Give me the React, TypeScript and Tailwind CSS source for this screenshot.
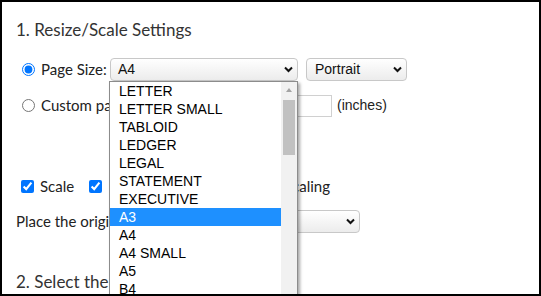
import React from "react"

const sizes = [
  "LETTER",
  "LETTER SMALL",
  "TABLOID",
  "LEDGER",
  "LEGAL",
  "STATEMENT",
  "EXECUTIVE",
  "A3",
  "A4",
  "A4 SMALL",
  "A5",
  "B4",
  "B5",
]

function Chevron() {
  return (
    <svg width="9" height="7" viewBox="0 0 9 7" className="text-[#111]">
      <polyline points="1,1.5 4.5,5 8,1.5" fill="none" stroke="currentColor" strokeWidth="2" />
    </svg>
  )
}

function FakeSelect({ value, className }: { value: string; className: string }) {
  return (
    <div
      className={`flex h-[23px] items-center justify-between rounded-[4px] border border-[#c8c8c8] bg-gradient-to-b from-white to-[#ececec] pr-[4px] font-['Liberation_Sans',Arial,sans-serif] text-[14px] text-[#111] ${className}`}
    >
      <span>{value}</span>
      <Chevron />
    </div>
  )
}

export default function App() {
  return (
    <div className="relative h-[296px] w-[541px] overflow-hidden border-2 border-black bg-white font-['Lato',sans-serif] text-[#222]">
      <div className="pl-[14px] pt-[16px]">
        <h2 className="text-[17px] leading-[24px] text-[#333]">1. Resize/Scale Settings</h2>

        <div className="mt-[16px] flex items-center">
          <input type="radio" name="size" defaultChecked className="m-0 ml-[6px] h-[13px] w-[13px]" />
          <span className="ml-[6px] w-[69px] text-[15px]">Page Size:</span>
          <FakeSelect value="A4" className="w-[188px] pl-[7px]" />
          <FakeSelect value="Portrait" className="ml-[8px] w-[101px] pl-[8px]" />
        </div>

        <div className="mt-[13px] flex h-[23px] items-center">
          <input type="radio" name="size" className="m-0 ml-[6px] h-[13px] w-[13px]" />
          <span className="ml-[6px] w-[120px] text-[15px]">Custom page size:</span>
          <div className="h-[22px] w-[56px] border border-[#d0d0d0]" />
          <span className="w-[52px] text-center text-[15px]">x</span>
          <div className="h-[22px] w-[63px] border border-[#d0d0d0]" />
          <span className="ml-[5px] font-['Liberation_Sans',Arial,sans-serif] text-[14px] text-[#222]">(inches)</span>
        </div>

        <div className="mt-[58px] flex h-[22px] items-center">
          <input type="checkbox" defaultChecked className="m-0 ml-[5px] h-[13px] w-[13px]" />
          <span className="ml-[6px] w-[49px] text-[15px]">Scale</span>
          <input type="checkbox" defaultChecked className="m-0 h-[13px] w-[13px]" />
          <span className="ml-[6px] w-[222px] text-right text-[15px]">Prevent page up-scaling</span>
        </div>

        <div className="mt-[13px] flex h-[23px] items-center">
          <span className="w-[200px] text-[15px]">Place the original page at:</span>
          <FakeSelect value="Center" className="ml-[2px] w-[142px] pl-[8px]" />
        </div>

        <h2 className="mt-[37px] text-[17px] leading-[24px] text-[#333]">2. Select the pages to resize</h2>
      </div>

      <div className="absolute left-[107px] top-[79px] flex w-[189px] border border-[#8c8c8c] bg-white shadow-[2px_2px_3px_rgba(0,0,0,0.35)]">
        <ul className="flex-1 font-['Liberation_Sans',Arial,sans-serif] text-[14px] leading-[18px] text-black">
          {sizes.map((s) => (
            <li key={s} className={s === "A3" ? "bg-[#1e90ff] pl-[9px] text-white" : "pl-[9px]"}>
              {s}
            </li>
          ))}
        </ul>
        <div className="relative w-[16px] bg-[#f1f1f1]">
          <svg width="16" height="16" viewBox="0 0 16 16" className="block">
            <polygon points="8,6 11,10 5,10" fill="#a3a3a3" />
          </svg>
          <div className="mx-[2px] mt-[2px] h-[55px] bg-[#c1c1c1]" />
        </div>
      </div>
    </div>
  )
}
